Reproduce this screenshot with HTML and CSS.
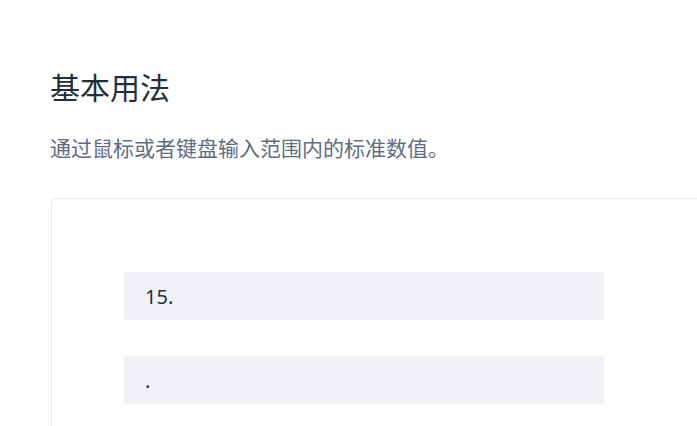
FILE: index.html
```html
<!DOCTYPE html>
<html lang="zh-CN">
<head>
<meta charset="utf-8">
<title>基本用法</title>
<link rel="stylesheet" href="styles.css">
</head>
<body>
<main class="page">
  <h2 class="title">基本用法</h2>
  <p class="desc">通过鼠标或者键盘输入范围内的标准数值。</p>
  <section class="demo">
    <div class="field"><input class="input" type="text" value="15."></div>
    <div class="field"><input class="input" type="text" value="."></div>
  </section>
</main>
</body>
</html>
```
FILE: styles.css
```css
html, body {
  margin: 0;
  padding: 0;
  background: #ffffff;
  overflow: hidden;
}
body {
  font-family: "Noto Sans", "Noto Sans CJK SC", sans-serif;
}
.page {
  padding: 68px 0 0 50px;
  width: 760px;
}
.title {
  margin: 0;
  font-size: 30px;
  line-height: 40px;
  font-weight: 400;
  color: #1f2f3d;
}
.desc {
  margin: 25px 0 0;
  font-size: 21px;
  line-height: 30px;
  color: #5e6d82;
}
.demo {
  margin-top: 35px;
  margin-left: 1px;
  border: 1px solid #ebebeb;
  border-radius: 4px;
  padding: 73px 72px 40px;
  display: flex;
  flex-direction: column;
  gap: 36px;
}
.input {
  box-sizing: border-box;
  width: 480px;
  height: 48px;
  border: none;
  outline: none;
  border-radius: 4px;
  background: #f0f2f5;
  padding: 0 21px;
  font-family: "Noto Sans", sans-serif;
  font-size: 20px;
  color: #1f2d3d;
  display: block;
}
```
